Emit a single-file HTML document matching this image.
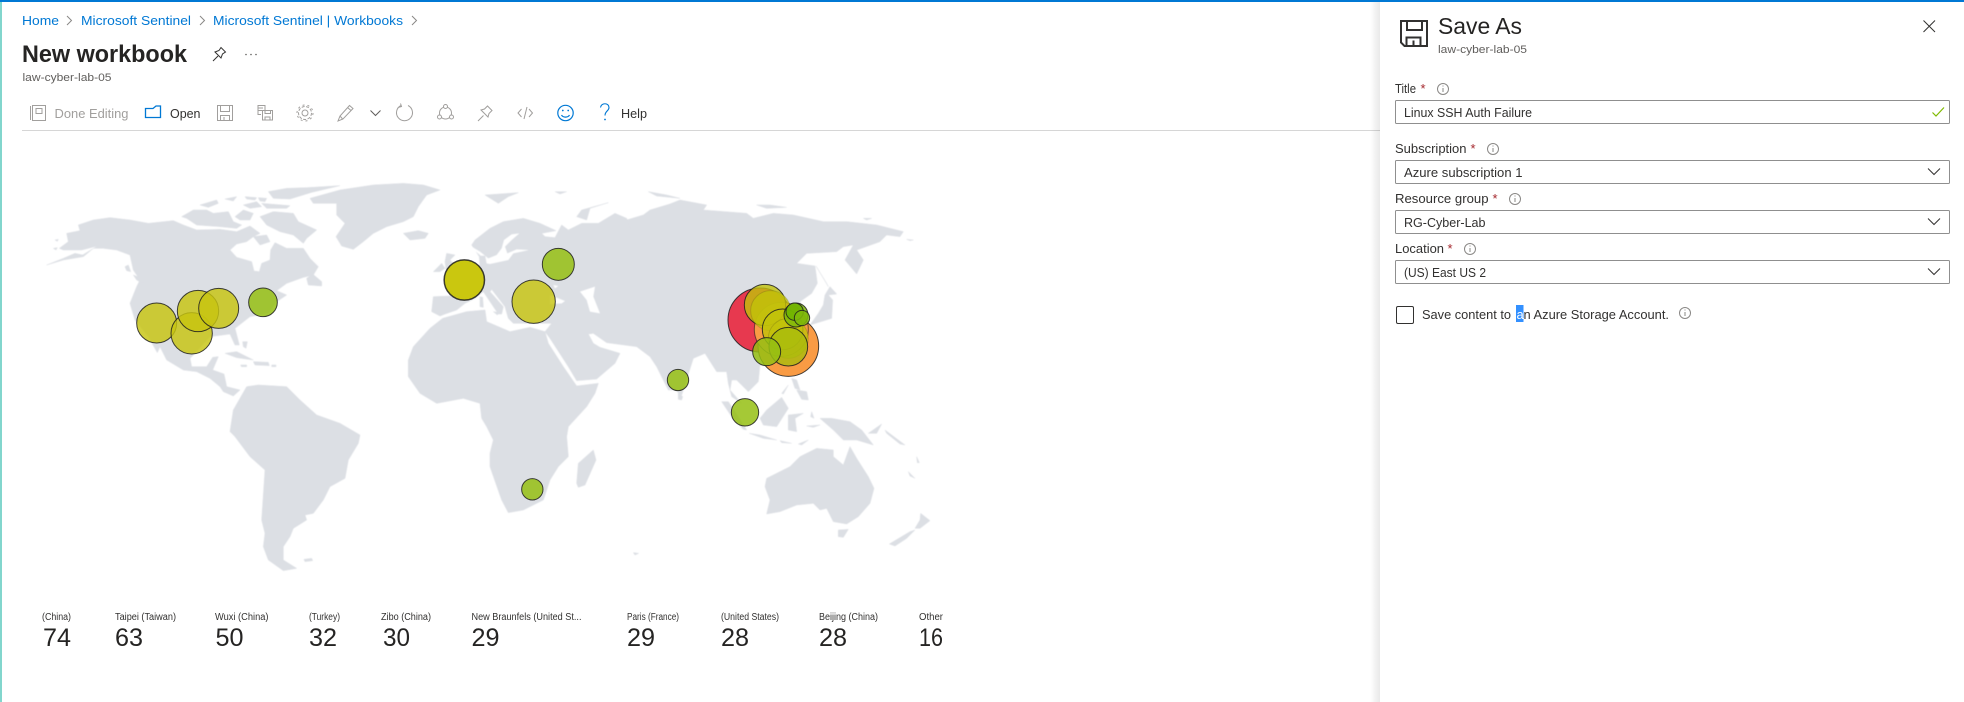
<!DOCTYPE html>
<html><head><meta charset="utf-8"><title>Save As</title>
<style>
html,body{margin:0;padding:0;background:#fff;width:1964px;height:702px;overflow:hidden}
svg{display:block}
text{font-family:"Liberation Sans",sans-serif;fill:#252423}
.l{fill:#0078d4;font-size:13px}
.g{fill:#a19f9d;font-size:13px}
.t{font-size:13px;fill:#323130}
.s{font-size:10px;fill:#605e5c}
.c{font-size:10px;fill:#323130}
.n{font-size:25px;fill:#252423}
.ic{fill:none;stroke:#a19f9d;stroke-width:1}
.st{fill:#a4262c;font-size:13px}
.inf{fill:none;stroke:#8a8886;stroke-width:1}
.box{fill:#fff;stroke:#8f8f8f;stroke-width:1}
.land{fill:#dcdfe4;stroke:#dcdfe4;stroke-width:1.5;stroke-linejoin:round}
.sea{fill:#fff;stroke:none}
.b{stroke:#1e1e1e;stroke-width:3;stroke-opacity:.85}
</style></head><body>
<svg width="1964" height="702" viewBox="0 0 1964 702" xmlns="http://www.w3.org/2000/svg">
<defs><linearGradient id="sh" x1="0" x2="1" y1="0" y2="0"><stop offset="0" stop-color="#000" stop-opacity="0"/><stop offset="1" stop-color="#000" stop-opacity=".09"/></linearGradient>
<filter id="sf" x="-2%" y="-2%" width="104%" height="104%"><feGaussianBlur stdDeviation="1.2"/></filter></defs>
<rect width="1964" height="702" fill="#fff"/>
<rect x="0" y="0" width="2" height="702" fill="#82d6cd"/>
<rect x="0" y="0" width="1964" height="2" fill="#0078d4"/>

<!-- breadcrumb -->
<text class="l" x="22" y="25" textLength="37" lengthAdjust="spacingAndGlyphs">Home</text>
<path d="M67 16l4.500 4.500-4.500 4.500" fill="none" stroke="#8a8886"/>
<text class="l" x="81" y="25" textLength="110" lengthAdjust="spacingAndGlyphs">Microsoft Sentinel</text>
<path d="M200 16l4.500 4.500-4.500 4.500" fill="none" stroke="#8a8886"/>
<text class="l" x="213" y="25" textLength="190" lengthAdjust="spacingAndGlyphs">Microsoft Sentinel | Workbooks</text>
<path d="M412 16l4.500 4.500-4.500 4.500" fill="none" stroke="#8a8886"/>

<!-- title -->
<text x="22" y="62" font-size="24" font-weight="700" textLength="165" lengthAdjust="spacingAndGlyphs">New workbook</text>
<g fill="none" stroke="#323130" stroke-width="1"><path d="M213 61l5-5M215 52l6 6 1.500-4 3-2-4.500-4.500-2 3z"/></g>
<g fill="#605e5c"><circle cx="246" cy="54.500" r=".8"/><circle cx="251" cy="54.500" r=".8"/><circle cx="256" cy="54.500" r=".8"/></g>
<text class="s" x="22.500" y="81" textLength="89" lengthAdjust="spacingAndGlyphs" style="font-size:11px">law-cyber-lab-05</text>

<!-- toolbar -->
<g class="ic">
<path d="M32.500 105.500h13v15h-13zM30.500 106v14M36 108.500h6v5h-6z"/>
</g>
<text class="g" x="54.500" y="118" textLength="74" lengthAdjust="spacingAndGlyphs">Done Editing</text>
<path d="M145.500 108.500h7.500l3-2.500h4.500v11.500h-15z" fill="none" stroke="#0078d4" stroke-width="1.300"/>
<text class="t" x="170" y="118" textLength="30.500" lengthAdjust="spacingAndGlyphs">Open</text>
<g class="ic">
<path d="M217.500 105.500h15v15h-15zM220.500 105.500v6h9v-6M220.500 120.500v-5h9v5M224 117v3.500"/>
<path d="M258 105.500h7v5h-7zM258 110.500v4h3M258 108h5M263 110.500h9.500v9.500h-10v-9M265 110.500v3h5.500v-3M265 120v-3h5v3"/>
<circle cx="305" cy="113" r="3"/><circle cx="305" cy="113" r="6.500" stroke-dasharray="3 1.500"/><circle cx="305" cy="113" r="8" stroke-dasharray="2 3"/>
<path d="M338 121l2-5 9.500-10.500 3.500 3-10 10.500zM340 116l3 3.500M347.500 107.500l3.500 3"/>
<path d="M370.500 110.500l5 5 5-5" stroke="#605e5c"/>
<path d="M401 105.500a8 8 0 1 0 7 0M400.500 103.500l1 3-3.500 1"/>
<circle cx="445.500" cy="113" r="6"/><circle cx="445.500" cy="106.500" r="2" fill="#fff"/><circle cx="439.500" cy="117" r="2" fill="#fff"/><circle cx="451.500" cy="117" r="2" fill="#fff"/>
<path d="M478 121l5.500-5.500M481 110l7 7 1-3.500 3-3-4.500-4.500-3 3z"/>
<path d="M521.500 109l-3.500 4 3.500 4M529 109l3.500 4-3.500 4M527 107l-3 12"/>
</g>
<g fill="none" stroke="#0078d4" stroke-width="1.200"><circle cx="565.500" cy="113" r="7.700"/><path d="M561.500 115c1.500 2.800 6.500 2.800 8 0"/></g>
<circle cx="562.800" cy="110.500" r=".9" fill="#0078d4"/><circle cx="568.200" cy="110.500" r=".9" fill="#0078d4"/>
<path d="M600.500 107.500c.5-5 8.500-5 8.500 0 0 3.500-4 3.500-4 8" fill="none" stroke="#0078d4" stroke-width="1.100"/><circle cx="605" cy="119.500" r=".9" fill="#0078d4"/>
<text class="t" x="621" y="118" textLength="26" lengthAdjust="spacingAndGlyphs">Help</text>
<rect x="22" y="130" width="1358" height="1" fill="#d6d6d6"/>

<!-- map -->
<g transform="translate(20 170) scale(.33333)">
<g filter="url(#sf)">
<g class="land">
<!-- North America -->
<path d="M80 285L130 265 165 250 188 255 232 228 185 240 130 240 118 235 145 215 140 190 180 182 175 165 220 150 270 143 330 150 385 160 460 152 490 165 530 180 600 178 650 185 690 168 720 190 700 200 680 215 650 222 630 240 650 262 695 275 702 303 718 305 725 280 750 270 752 240 765 218 800 235 850 235 870 265 895 290 880 315 850 322 800 340 770 362 800 375 770 395 745 430 690 440 645 475 658 525 645 525 630 492 570 500 520 555 510 565 515 590 560 590 578 562 595 560 578 600 612 612 620 650 660 660 640 678 610 665 600 650 570 625 530 605 490 600 440 570 420 530 412 548 385 500 345 450 330 400 350 350 360 330 340 300 330 255 290 240 250 235 220 235 190 260 130 270Z"/>
<!-- Arctic -->
<path d="M485 140L520 120 560 120 580 130 625 125 640 155 665 165 650 175 600 170 530 165 500 145Z"/>
<path d="M540 105L590 90 595 100 565 112Z"/>
<path d="M615 87L650 80 640 93Z"/>
<path d="M645 140L670 120 700 130 690 150 660 150Z"/>
<path d="M670 105L710 95 725 110 690 115Z"/>
<path d="M675 80L710 83 705 90 680 87Z"/>
<path d="M715 83L740 85 735 95 720 93Z"/>
<path d="M725 100L810 107 800 115 740 115Z"/>
<path d="M745 65L800 55 860 53 960 47 875 67 810 87 760 85Z"/>
<path d="M720 140L760 125 820 130 835 155 890 180 860 205 850 220 820 195 780 185 740 165Z"/>
<path d="M700 200L740 195 750 215 720 225Z"/>
<path d="M105 210L115 208 112 214Z"/><path d="M100 235L112 233 108 240Z"/>
<!-- Greenland -->
<path d="M870 85L960 60 1060 45 1150 40 1210 45 1260 60 1220 75 1195 110 1180 140 1150 155 1100 170 1060 190 1030 215 1000 238 965 228 948 200 975 160 950 135 950 100 880 100Z"/>
<path d="M1150 190L1195 182 1225 190 1215 205 1170 210Z"/>
<path d="M860 325L878 312 905 335 905 348 865 345Z"/>
<path d="M315 290L325 285 332 305 320 302Z"/><path d="M340 315L365 325 372 342 350 330Z"/>
<!-- Caribbean -->
<path d="M615 550L650 545 700 570 650 563Z"/><path d="M700 575L745 577 748 587 705 585Z"/><path d="M755 585L768 585 768 590 755 590Z"/><path d="M662 585L680 585 680 590 664 590Z"/><path d="M668 515L682 515 678 535 670 530Z"/>
<!-- South America -->
<path d="M640 720L680 650 715 645 800 650 840 690 890 735 960 760 1020 795 1015 820 985 870 975 925 930 950 910 990 880 1030 855 1035 860 1050 820 1075 810 1100 790 1130 790 1170 830 1195 790 1202 745 1170 730 1130 735 1090 725 1050 735 900 690 860 645 800 630 785Z"/>
<path d="M852 1168L875 1165 878 1172 855 1175Z"/>
<!-- Africa -->
<path d="M1165 620L1165 570 1180 530 1230 475 1268 445 1340 425 1395 420 1400 455 1470 485 1530 472 1575 485 1585 520 1630 590 1670 648 1735 640 1725 670 1700 710 1645 770 1640 800 1645 860 1615 890 1590 930 1570 990 1510 1020 1465 1028 1445 990 1410 890 1410 850 1420 810 1400 770 1385 745 1380 700 1330 685 1250 700 1200 670Z"/>
<path d="M1670 940L1675 880 1720 840 1728 870 1695 945 1675 952Z"/>
<!-- Eurasia -->
<path d="M1235 425L1240 380 1290 378 1292 340 1330 300 1380 288 1378 260 1355 225 1365 210 1410 175 1450 155 1510 145 1560 160 1608 182 1565 190 1575 200 1605 203 1625 165 1645 180 1685 160 1735 160 1785 130 1820 145 1835 185 1820 150 1870 135 1890 120 1950 102 1980 90 2060 105 2050 120 2180 130 2200 145 2260 130 2320 135 2410 155 2480 155 2570 165 2650 185 2640 200 2600 195 2580 215 2510 240 2530 270 2510 312 2475 270 2500 225 2470 230 2450 245 2360 250 2330 280 2385 288 2392 340 2375 370 2340 395 2350 460 2340 480 2300 600 2250 590 2220 585 2215 635 2185 665 2150 630 2135 630 2130 660 2165 700 2135 680 2125 640 2120 605 2090 605 2055 550 2020 565 1985 675 1965 660 1945 660 1910 590 1890 560 1850 530 1760 518 1720 490 1705 492 1720 520 1740 532 1800 550 1785 580 1730 627 1670 632 1645 590 1590 505 1575 485 1595 460 1540 460 1480 460 1465 445 1455 410 1415 358 1410 365 1450 410 1445 432 1435 432 1390 365 1365 385 1335 400 1310 420 1275 432 1260 438Z"/>
<!-- N Eurasia islands -->
<path d="M1395 75L1495 68 1465 80 1435 100Z"/><path d="M1605 65L1640 65 1620 72Z"/>
<path d="M1670 140L1685 120 1765 98 1710 115 1700 150Z"/>
<path d="M1885 65L1940 75 1980 85 1910 78Z"/><path d="M2210 105L2250 105 2300 112 2240 115Z"/><path d="M2530 145L2555 145 2540 150Z"/><path d="M2660 208L2680 210 2670 212Z"/>
<!-- UK -->
<path d="M1275 275L1280 250 1305 255 1290 270 1325 310 1300 330 1280 310Z"/><path d="M1240 305L1265 280 1275 295 1260 305Z"/>
<path d="M1380 380L1388 382 1390 412 1380 410Z"/><path d="M1420 425L1438 428 1432 435Z"/>
<!-- Japan -->
<path d="M2370 465L2435 445 2438 390 2425 375 2450 372 2430 350 2415 375 2410 405 2395 430Z"/>
<path d="M2388 288L2425 350 2420 340Z"/>
<!-- SE Asia islands -->
<path d="M2220 745L2240 720 2285 682 2305 715 2270 770 2230 765Z"/>
<path d="M2105 695L2125 695 2155 740 2180 780 2170 778 2135 740Z"/>
<path d="M2188 790L2220 795 2270 810 2230 805Z"/>
<path d="M2280 812L2315 820 2285 818Z"/><path d="M2335 822L2365 810 2345 825Z"/>
<path d="M2305 735L2350 730 2325 745 2330 785 2305 780Z"/>
<path d="M2375 725L2382 745 2372 740Z"/>
<path d="M2315 625L2330 630 2340 660 2325 655Z"/><path d="M2330 660L2360 665 2365 690 2345 688Z"/><path d="M2285 670L2305 645 2290 672Z"/>
<path d="M2400 745L2435 745 2490 755 2525 780 2560 825 2510 810 2470 810 2440 780Z"/>
<path d="M2360 768L2400 765 2380 772Z"/>
<path d="M2545 790L2585 762 2570 790Z"/><path d="M2595 780L2655 825 2640 822 2600 790Z"/><path d="M2665 905L2685 925 2670 918Z"/><path d="M2690 860L2698 878 2692 878Z"/>
<path d="M1975 668L1988 680 1985 690 1975 688Z"/>
<!-- Australia -->
<path d="M2235 950L2240 925 2310 890 2340 860 2390 835 2440 840 2440 860 2470 885 2490 830 2510 865 2545 920 2562 955 2550 1000 2515 1040 2480 1062 2440 1055 2420 1015 2400 1020 2380 1000 2330 1005 2280 1025 2240 1032 2250 990Z"/>
<path d="M2455 1080L2485 1078 2470 1102 2455 1100Z"/>
<path d="M2608 1122L2670 1085 2685 1080 2660 1105 2625 1128Z"/>
<path d="M2685 1075L2700 1050 2702 1030 2730 1052 2700 1075Z"/>
<path d="M1840 1148L1856 1150 1845 1155Z"/>
</g>
<!-- inland seas -->
<g class="sea">
<path d="M1355 235L1380 255 1400 280 1410 282 1465 270 1480 250 1527 240 1490 238 1462 250 1455 230 1475 210 1498 190 1475 193 1452 210 1445 235 1430 255 1405 265 1380 245 1355 230Z"/>
<path d="M1590 375L1635 393 1625 400 1590 402Z"/>
<path d="M1600 345L1615 348 1605 355Z"/>
<path d="M1680 365L1725 350 1720 380 1740 430 1710 425 1700 390Z"/>
<path d="M760 240L790 238 780 250Z" opacity="0"/>
</g>
<path class="land" d="M1382 258L1395 258 1400 285 1382 290Z"/>
</g>
<!-- bubbles -->
<g class="b">
<g fill="#c7c410" fill-opacity=".82">
<circle cx="410" cy="459" r="60"/><circle cx="515" cy="490" r="62"/><circle cx="534" cy="423" r="62"/><circle cx="596" cy="415" r="60"/>
<circle cx="1541" cy="395" r="65"/>
</g>
<circle cx="1333" cy="330" r="60.500" fill="#cac70f" stroke-width="4.500"/>
<g fill="#95bf13" fill-opacity=".85">
<circle cx="729" cy="397" r="43"/><circle cx="1615" cy="283" r="48"/><circle cx="1974" cy="630" r="32"/><circle cx="2175" cy="727" r="41"/><circle cx="1537" cy="958" r="32"/>
</g>
<circle cx="2220" cy="450" r="96" fill="#e7394f"/>
<circle cx="2305" cy="528" r="91" fill="#f99b44"/>
<circle cx="2284" cy="478" r="81" fill="#f99b44" stroke-opacity=".6"/>
<g fill="#c2c20a" fill-opacity=".8">
<circle cx="2235" cy="405" r="62"/>
<circle cx="2252" cy="422" r="60" stroke-opacity=".15"/>
<circle cx="2288" cy="478" r="61"/>
<circle cx="2305" cy="505" r="60" stroke-opacity=".15"/>
</g>
<circle cx="2305" cy="530" r="58" fill="#a9bb0c" fill-opacity=".8"/>
<circle cx="2240" cy="545" r="42" fill="#95bf13" fill-opacity=".85"/>
<circle cx="2328" cy="435" r="36" fill="#7fb90a" fill-opacity=".85"/>
<circle cx="2324" cy="425" r="26" fill="#6eb400" fill-opacity=".85"/>
<circle cx="2346" cy="444" r="23" fill="#7fb90a" fill-opacity=".85"/>
</g>
</g>

<!-- stats -->
<g>
<text class="c" x="42" y="620" textLength="29" lengthAdjust="spacingAndGlyphs">(China)</text><text class="n" x="43" y="646" textLength="28" lengthAdjust="spacingAndGlyphs">74</text>
<text class="c" x="115" y="620" textLength="61" lengthAdjust="spacingAndGlyphs">Taipei (Taiwan)</text><text class="n" x="115" y="646" textLength="28" lengthAdjust="spacingAndGlyphs">63</text>
<text class="c" x="215" y="620" textLength="53.500" lengthAdjust="spacingAndGlyphs">Wuxi (China)</text><text class="n" x="215.500" y="646" textLength="28" lengthAdjust="spacingAndGlyphs">50</text>
<text class="c" x="309" y="620" textLength="31" lengthAdjust="spacingAndGlyphs">(Turkey)</text><text class="n" x="309" y="646" textLength="28" lengthAdjust="spacingAndGlyphs">32</text>
<text class="c" x="381" y="620" textLength="50" lengthAdjust="spacingAndGlyphs">Zibo (China)</text><text class="n" x="383" y="646" textLength="27" lengthAdjust="spacingAndGlyphs">30</text>
<text class="c" x="471.500" y="620" textLength="110" lengthAdjust="spacingAndGlyphs">New Braunfels (United St...</text><text class="n" x="471.500" y="646" textLength="28" lengthAdjust="spacingAndGlyphs">29</text>
<text class="c" x="627" y="620" textLength="52" lengthAdjust="spacingAndGlyphs">Paris (France)</text><text class="n" x="627" y="646" textLength="28" lengthAdjust="spacingAndGlyphs">29</text>
<text class="c" x="721" y="620" textLength="58" lengthAdjust="spacingAndGlyphs">(United States)</text><text class="n" x="721" y="646" textLength="28" lengthAdjust="spacingAndGlyphs">28</text>
<text class="c" x="819" y="620" textLength="59" lengthAdjust="spacingAndGlyphs">Beijing (China)</text><text class="n" x="819" y="646" textLength="28" lengthAdjust="spacingAndGlyphs">28</text>
<text class="c" x="919" y="620" textLength="24" lengthAdjust="spacingAndGlyphs">Other</text><text class="n" x="919" y="646" textLength="24" lengthAdjust="spacingAndGlyphs">16</text>
</g>

<!-- panel -->
<rect x="1370" y="2" width="10" height="700" fill="url(#sh)"/>
<rect x="1380" y="2" width="584" height="700" fill="#fff"/>
<g fill="none" stroke="#323130" stroke-width="2">
<path d="M1401 21h26v25h-22.500l-3.500-3.500zM1407 21v9h15V21M1406.500 46v-8.500h14V46M1413.500 40.500V46"/>
</g>
<text x="1438" y="34" font-size="23" textLength="84" lengthAdjust="spacingAndGlyphs" style="fill:#252423">Save As</text>
<text class="s" x="1438" y="53" textLength="89" lengthAdjust="spacingAndGlyphs" style="font-size:11px">law-cyber-lab-05</text>
<path d="M1923.500 20.500l11.500 11.500M1935 20.500l-11.500 11.500" fill="none" stroke="#323130"/>

<text class="t" x="1395" y="93" textLength="21" lengthAdjust="spacingAndGlyphs">Title</text>
<text class="st" x="1420.500" y="93">*</text>
<g class="inf"><circle cx="1443" cy="89" r="5.500"/><path d="M1443 88v4M1443 85.500v1"/></g>
<rect class="box" x="1395.500" y="100.500" width="554" height="23" rx="1"/>
<text class="t" x="1404" y="117" textLength="128" lengthAdjust="spacingAndGlyphs">Linux SSH Auth Failure</text>
<path d="M1932.500 112.500l3.500 3.500 8-8.500" fill="none" stroke="#7fba00" stroke-width="1.200"/>

<text class="t" x="1395" y="153" textLength="71.500" lengthAdjust="spacingAndGlyphs">Subscription</text>
<text class="st" x="1470.500" y="153">*</text>
<g class="inf"><circle cx="1493" cy="149" r="5.500"/><path d="M1493 148v4M1493 145.500v1"/></g>
<rect class="box" x="1395.500" y="160.500" width="554" height="23" rx="1"/>
<text class="t" x="1404" y="177" textLength="118.500" lengthAdjust="spacingAndGlyphs">Azure subscription 1</text>
<path d="M1928 168.500l6 6 6-6" fill="none" stroke="#323130"/>

<text class="t" x="1395" y="203" textLength="93.500" lengthAdjust="spacingAndGlyphs">Resource group</text>
<text class="st" x="1492.500" y="203">*</text>
<g class="inf"><circle cx="1515" cy="199" r="5.500"/><path d="M1515 198v4M1515 195.500v1"/></g>
<rect class="box" x="1395.500" y="210.500" width="554" height="23" rx="1"/>
<text class="t" x="1404" y="227" textLength="81.500" lengthAdjust="spacingAndGlyphs">RG-Cyber-Lab</text>
<path d="M1928 218.500l6 6 6-6" fill="none" stroke="#323130"/>

<text class="t" x="1395" y="253" textLength="49" lengthAdjust="spacingAndGlyphs">Location</text>
<text class="st" x="1447.500" y="253">*</text>
<g class="inf"><circle cx="1470" cy="249" r="5.500"/><path d="M1470 248v4M1470 245.500v1"/></g>
<rect class="box" x="1395.500" y="260.500" width="554" height="23" rx="1"/>
<text class="t" x="1404" y="277" textLength="82" lengthAdjust="spacingAndGlyphs">(US) East US 2</text>
<path d="M1928 268.500l6 6 6-6" fill="none" stroke="#323130"/>

<rect x="1396.500" y="306.500" width="17" height="17" rx="1.500" fill="#fff" stroke="#323130"/>
<rect x="1516" y="305" width="7.500" height="17" fill="#3390ff"/>
<text class="t" x="1422" y="319" textLength="89" lengthAdjust="spacingAndGlyphs">Save content to</text>
<text class="t" x="1516.500" y="319" style="fill:#fff">a</text>
<text class="t" x="1523.500" y="319" textLength="145.500" lengthAdjust="spacingAndGlyphs">n Azure Storage Account.</text>
<g class="inf"><circle cx="1685" cy="313" r="5.500"/><path d="M1685 312v4M1685 309.500v1"/></g>
</svg>
</body></html>
